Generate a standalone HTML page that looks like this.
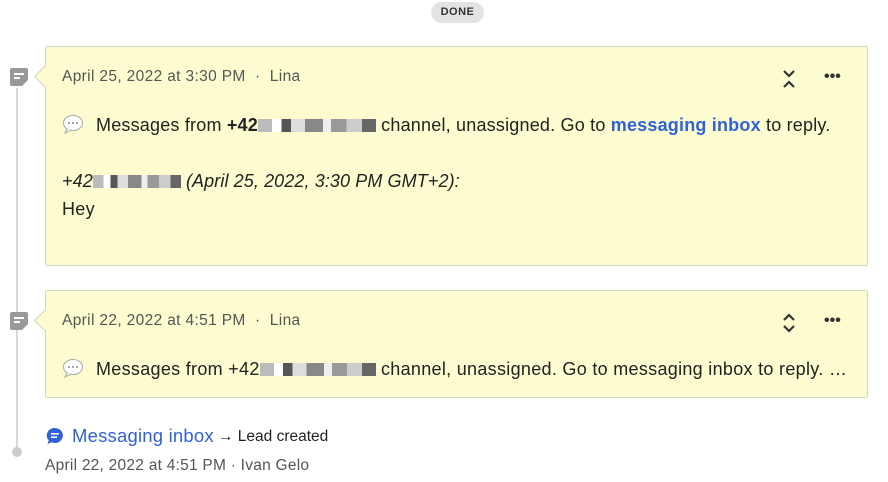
<!DOCTYPE html>
<html><head><meta charset="utf-8"><style>
*{margin:0;padding:0;box-sizing:border-box}
body{width:888px;height:482px;background:#fff;font-family:"Liberation Sans",sans-serif;color:#222;position:relative;overflow:hidden}
.abs{position:absolute}
.pill{left:431px;top:2px;width:53px;height:21px;border-radius:11px;background:#e3e3e3;font-size:11px;font-weight:bold;color:#333;text-align:center;line-height:21px;letter-spacing:.5px}
.line{left:16px;top:88px;width:2px;height:362px;background:#d8d8d8}
.card{left:45px;width:823px;background:#fcfcd0;border:1px solid #d6d6c0;border-radius:2px}
.card:before{content:"";position:absolute;left:-9px;top:22px;width:14px;height:14px;background:#fcfcd0;border-left:1px solid #d6d6c0;border-bottom:1px solid #d6d6c0;transform:rotate(45deg)}
.meta{font-size:15.5px;color:#555;letter-spacing:.35px}
.txt{font-size:18px;color:#222;letter-spacing:.3px;white-space:nowrap}
.blk{display:inline-block;height:13px;vertical-align:-1px;background:linear-gradient(90deg,#bbb 0 12%,#fff 12% 20%,#555 20% 28%,#ddd 28% 40%,#888 40% 55%,#eee 55% 62%,#999 62% 75%,#ccc 75% 88%,#666 88%)}
.dots{font-size:16px;font-weight:bold;letter-spacing:0;color:#333}
.ic{left:9px;width:20px;height:19px}
</style></head><body>
<div class="abs pill">DONE</div>
<div class="abs line"></div>

<svg class="abs ic" style="top:68px" viewBox="0 0 20 19"><path d="M1 2a2 2 0 0 1 2-2h14a2 2 0 0 1 2 2v10l-6 6H3a2 2 0 0 1-2-2z" fill="#999"/><rect x="5" y="5" width="10" height="2" fill="#fff"/><rect x="5" y="9" width="6" height="2" fill="#fff"/></svg>
<svg class="abs ic" style="top:312px" viewBox="0 0 20 19"><path d="M1 2a2 2 0 0 1 2-2h14a2 2 0 0 1 2 2v10l-6 6H3a2 2 0 0 1-2-2z" fill="#999"/><rect x="5" y="5" width="10" height="2" fill="#fff"/><rect x="5" y="9" width="6" height="2" fill="#fff"/></svg>

<div class="abs card" style="top:46px;height:220px"></div>
<div class="abs meta" style="left:62px;top:68px">April 25, 2022 at 3:30 PM &nbsp;·&nbsp; Lina</div>
<svg class="abs" style="left:781px;top:69px" width="16" height="20" viewBox="0 0 16 20"><path d="M3 2l5 5 5-5M3 18l5-5 5 5" stroke="#333" stroke-width="2.2" fill="none"/></svg>
<div class="abs dots" style="left:824px;top:68px">•••</div>
<svg class="abs" style="left:62px;top:114px" width="22" height="20" viewBox="0 0 22 20"><ellipse cx="11" cy="9" rx="9.5" ry="7.5" fill="#fff" stroke="#aaa"/><path d="M5 15l-2 4 6-3" fill="#fff" stroke="#aaa"/><circle cx="7" cy="9" r="1" fill="#888"/><circle cx="11" cy="9" r="1" fill="#888"/><circle cx="15" cy="9" r="1" fill="#888"/></svg>
<div class="abs txt" style="left:96px;top:115px;letter-spacing:.2px">Messages from <b>+42<span class="blk" style="width:118px"></span></b> channel, unassigned. Go to <b style="color:#2f62d8">messaging inbox</b> to reply.</div>
<div class="abs txt" style="left:62px;top:171px;font-style:italic;letter-spacing:.1px">+42<span class="blk" style="width:88px"></span> (April 25, 2022, 3:30 PM GMT+2):</div>
<div class="abs txt" style="left:62px;top:199px">Hey</div>

<div class="abs card" style="top:290px;height:108px"></div>
<div class="abs meta" style="left:62px;top:312px">April 22, 2022 at 4:51 PM &nbsp;·&nbsp; Lina</div>
<svg class="abs" style="left:781px;top:313px" width="16" height="20" viewBox="0 0 16 20"><path d="M3 7l5-5 5 5M3 13l5 5 5-5" stroke="#333" stroke-width="2.2" fill="none"/></svg>
<div class="abs dots" style="left:824px;top:312px">•••</div>
<svg class="abs" style="left:62px;top:358px" width="22" height="20" viewBox="0 0 22 20"><ellipse cx="11" cy="9" rx="9.5" ry="7.5" fill="#fff" stroke="#aaa"/><path d="M5 15l-2 4 6-3" fill="#fff" stroke="#aaa"/><circle cx="7" cy="9" r="1" fill="#888"/><circle cx="11" cy="9" r="1" fill="#888"/><circle cx="15" cy="9" r="1" fill="#888"/></svg>
<div class="abs txt" style="left:96px;top:359px">Messages from +42<span class="blk" style="width:116px"></span> channel, unassigned. Go to messaging inbox to reply. …</div>

<svg class="abs" style="left:46px;top:427px" width="18" height="18" viewBox="0 0 18 18"><path d="M9 1a8 7.5 0 1 1-3.5 14.3L1.5 17l1.2-3.6A8 7.5 0 0 1 9 1z" fill="#2f62d8"/><rect x="5" y="6" width="8" height="1.6" fill="#fff"/><rect x="5" y="9.4" width="6" height="1.6" fill="#fff"/></svg>
<div class="abs" style="left:72px;top:425px;font-size:18.5px;color:#2f62d8;letter-spacing:.2px">Messaging inbox</div>
<div class="abs" style="left:218px;top:428px;font-size:15.5px;color:#222;letter-spacing:0">→ Lead created</div>
<div class="abs" style="left:12px;top:447px;width:10px;height:10px;border-radius:50%;background:#ccc"></div>
<div class="abs meta" style="left:45px;top:457px;letter-spacing:.25px">April 22, 2022 at 4:51 PM · Ivan Gelo</div>
</body></html>
